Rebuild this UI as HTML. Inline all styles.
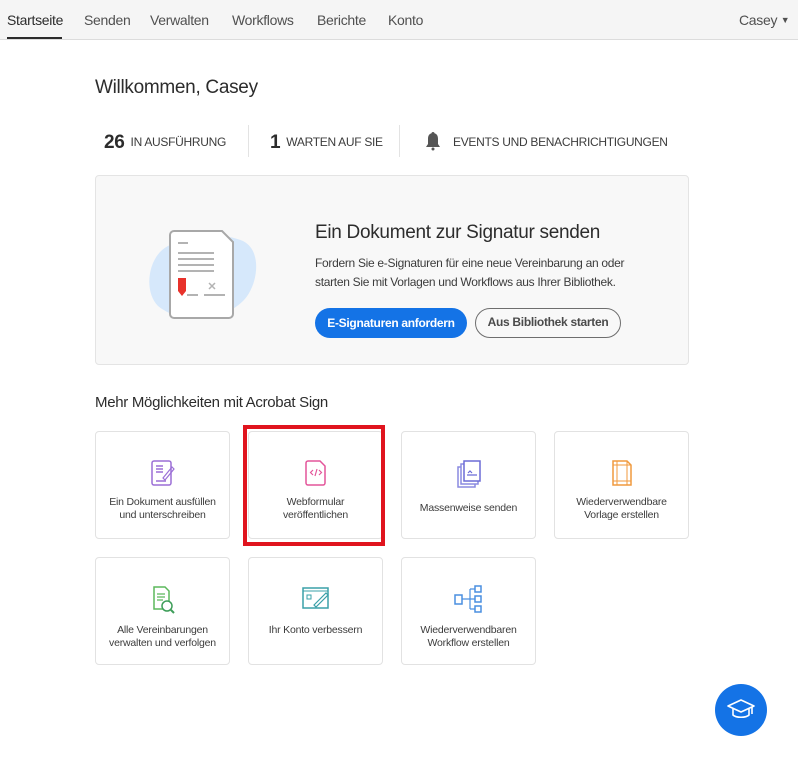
<!DOCTYPE html>
<html><head><meta charset="utf-8"><style>
*{box-sizing:border-box;margin:0;padding:0}
body{width:798px;height:784px;background:#fff;font-family:"Liberation Sans",sans-serif;color:#2c2c2c;position:relative;overflow:hidden}
.nav{position:absolute;left:0;top:0;width:798px;height:40px;background:#f5f5f5;border-bottom:1px solid #dcdcdc}
.nav span{position:absolute;top:12px;font-size:14px;color:#505050;letter-spacing:-0.3px}
.nav .act{color:#2c2c2c}
.ul{position:absolute;left:7px;top:37px;width:55px;height:2px;background:#2c2c2c}
h1{position:absolute;left:95px;top:77px;font-size:19px;font-weight:normal;color:#2c2c2c;letter-spacing:-0.3px}
.st{position:absolute;top:132px;font-size:12px;color:#3c3c3c;letter-spacing:-0.3px}
.st b{font-size:19px;font-weight:bold;color:#2c2c2c;margin-right:6px;vertical-align:-2px}
.sep{position:absolute;top:125px;width:1px;height:32px;background:#e3e3e3}
.hero{position:absolute;left:95px;top:175px;width:594px;height:190px;background:#f8f8f8;border:1px solid #e4e4e4;border-radius:4px}
.hero h2{position:absolute;left:219px;top:46px;font-size:19px;font-weight:normal;letter-spacing:-0.3px}
.hero p{position:absolute;left:219px;top:78px;font-size:12px;line-height:19px;color:#3c3c3c;width:340px;letter-spacing:-0.3px}
.b1{position:absolute;left:219px;top:132px;width:152px;height:30px;border-radius:15px;background:#1473e6;color:#fff;font-size:12px;font-weight:bold;text-align:center;line-height:30px;letter-spacing:-0.3px}
.b2{position:absolute;left:379px;top:132px;width:146px;height:30px;border-radius:15px;border:1.5px solid #6e6e6e;color:#4b4b4b;font-size:12px;font-weight:bold;text-align:center;line-height:27px;letter-spacing:-0.3px}
h3{position:absolute;left:95px;top:394px;font-size:15px;font-weight:normal;letter-spacing:-0.3px}
.c{position:absolute;width:135px;height:108px;border:1px solid #e2e2e2;border-radius:4px;background:#fff}
.c svg{position:absolute;left:50%;top:27px;transform:translateX(-50%)}
.c div{position:absolute;left:0;right:0;top:64px;text-align:center;font-size:10.5px;line-height:12.5px;color:#3c3c3c;letter-spacing:-0.2px}
.red{position:absolute;left:243px;top:425px;width:142px;height:121px;border:4px solid #e0141e}
.fab{position:absolute;left:715px;top:684px;width:52px;height:52px;border-radius:50%;background:#1473e6}
</style></head><body>
<div class="nav">
<span class="act" style="left:7px">Startseite</span>
<span style="left:84px">Senden</span>
<span style="left:150px">Verwalten</span>
<span style="left:232px">Workflows</span>
<span style="left:317px">Berichte</span>
<span style="left:388px">Konto</span>
<span style="left:739px">Casey <small style="font-size:9px;vertical-align:2px">▼</small></span>
<div class="ul"></div>
</div>
<h1>Willkommen, Casey</h1>
<div class="st" style="left:104px"><b>26</b>IN AUSFÜHRUNG</div>
<div class="sep" style="left:248px"></div>
<div class="st" style="left:270px"><b>1</b>WARTEN AUF SIE</div>
<div class="sep" style="left:399px"></div>
<svg style="position:absolute;left:424px;top:131px" width="18" height="20" viewBox="0 0 18 20"><path d="M9 1c-1 0-1.5.7-1.5 1.3C5 3 4 5 4 8v5l-2 3h14l-2-3V8c0-3-1-5-3.5-5.7C10.5 1.7 10 1 9 1z" fill="#555"/><circle cx="9" cy="18" r="1.5" fill="#555"/></svg>
<div class="st" style="left:453px;top:135px">EVENTS UND BENACHRICHTIGUNGEN</div>
<div class="hero">
<svg style="position:absolute;left:52px;top:50px" width="115" height="95" viewBox="0 0 115 95"><path d="M20 20C40 10 70 5 95 15c20 10 15 45 0 60-20 20-60 25-85 5C-5 65 0 30 20 20z" fill="#d6e8fb"/><path d="M26 5h48l11 11v72a4 4 0 0 1-4 4H26a4 4 0 0 1-4-4V9a4 4 0 0 1 4-4z" fill="#fff" stroke="#a8a8a8" stroke-width="2"/><path d="M30 17h10M30 27h36M30 33h36M30 39h36M30 45h36M56 69h21M39 69h11" stroke="#b3b3b3" stroke-width="2"/><path d="M61 57l6 6M67 57l-6 6" stroke="#b3b3b3" stroke-width="1.5"/><path d="M30 52h8v13l-4 5-4-5z" fill="#e8322b"/></svg>
<h2>Ein Dokument zur Signatur senden</h2>
<p>Fordern Sie e-Signaturen für eine neue Vereinbarung an oder starten Sie mit Vorlagen und Workflows aus Ihrer Bibliothek.</p>
<div class="b1">E-Signaturen anfordern</div>
<div class="b2">Aus Bibliothek starten</div>
</div>
<h3>Mehr Möglichkeiten mit Acrobat Sign</h3>
<div class="c" style="left:95px;top:431px"><svg width="26" height="28" viewBox="0 0 26 28"><rect x="2" y="2" width="19" height="24" rx="2" fill="none" stroke="#9b6fd6" stroke-width="1.5"/><path d="M6 7h7M6 10h7M6 13h7M6 22h10" stroke="#9b6fd6" stroke-width="1.5"/><path d="M13 19l9-11 2 2-9 11z" fill="none" stroke="#9b6fd6" stroke-width="1.2"/></svg><div>Ein Dokument ausfüllen<br>und unterschreiben</div></div>
<div class="c" style="left:248px;top:431px"><svg width="22" height="28" viewBox="0 0 22 28"><path d="M3 2h12l5 5v17a2 2 0 0 1-2 2H3a2 2 0 0 1-2-2V4a2 2 0 0 1 2-2z" fill="none" stroke="#e3559a" stroke-width="1.5"/><path d="M8 11l-2.5 2.5L8 16M14 11l2.5 2.5L14 16M12 10l-2 7" stroke="#e3559a" stroke-width="1.2" fill="none"/></svg><div>Webformular<br>veröffentlichen</div></div>
<div class="c" style="left:401px;top:431px"><svg width="26" height="30" viewBox="0 0 26 30"><rect x="2" y="8" width="17" height="20" fill="none" stroke="#8a8ae0" stroke-width="1.5"/><rect x="5" y="5" width="17" height="20" fill="#fff" stroke="#8a8ae0" stroke-width="1.5"/><rect x="8" y="2" width="16" height="20" fill="#fff" stroke="#6b6bd6" stroke-width="1.5"/><path d="M11 16h10M12 14l2-2 2 2" stroke="#6b6bd6" stroke-width="1.2" fill="none"/></svg><div style="top:70px">Massenweise senden</div></div>
<div class="c" style="left:554px;top:431px"><svg width="22" height="28" viewBox="0 0 22 28"><path d="M2 2h14l4 4v20H2z" fill="none" stroke="#f09a3e" stroke-width="1.5"/><path d="M2 6h18M2 22h18M6 2v24M16 2v24" stroke="#f09a3e" stroke-width="1"/></svg><div>Wiederverwendbare<br>Vorlage erstellen</div></div>
<div class="c" style="left:95px;top:557px"><svg width="26" height="30" viewBox="0 0 26 30"><path d="M4 2h11l4 4v18H4z" fill="none" stroke="#5cb85c" stroke-width="1.5"/><path d="M7 9h8M7 12h8M7 15h6" stroke="#5cb85c" stroke-width="1.2"/><circle cx="17" cy="21" r="5" fill="#fff" stroke="#3f9e5a" stroke-width="1.5"/><path d="M21 25l3 3" stroke="#3f9e5a" stroke-width="2"/></svg><div style="top:66px">Alle Vereinbarungen<br>verwalten und verfolgen</div></div>
<div class="c" style="left:248px;top:557px"><svg width="30" height="26" viewBox="0 0 30 26"><rect x="2" y="3" width="25" height="20" fill="none" stroke="#3aa0a8" stroke-width="1.5"/><path d="M2 6h25" stroke="#3aa0a8"/><rect x="6" y="10" width="4" height="4" fill="none" stroke="#3aa0a8"/><path d="M13 20l12-12 2 2-12 12z" fill="none" stroke="#3aa0a8" stroke-width="1.2"/></svg><div style="top:66px">Ihr Konto verbessern</div></div>
<div class="c" style="left:401px;top:557px"><svg width="30" height="30" viewBox="0 0 30 30"><rect x="1" y="10" width="7" height="9" fill="none" stroke="#4a8fe0" stroke-width="1.5"/><rect x="21" y="1" width="6" height="6" fill="none" stroke="#4a8fe0" stroke-width="1.5"/><rect x="21" y="11" width="6" height="6" fill="none" stroke="#4a8fe0" stroke-width="1.5"/><rect x="21" y="21" width="6" height="6" fill="none" stroke="#4a8fe0" stroke-width="1.5"/><path d="M8 14h8M16 4v20M16 4h5M16 14h5M16 24h5" stroke="#4a8fe0" stroke-width="1.2" fill="none"/></svg><div style="top:66px">Wiederverwendbaren<br>Workflow erstellen</div></div>
<div class="red"></div>
<div class="fab"><svg style="position:absolute;left:11px;top:13px" width="30" height="26" viewBox="0 0 30 26"><path d="M15 3L2 9l13 6 13-6z" fill="none" stroke="#fff" stroke-width="1.6" stroke-linejoin="round"/><path d="M7 12v6c3 3 13 3 16 0v-6" fill="none" stroke="#fff" stroke-width="1.6"/><path d="M26 10v7" stroke="#fff" stroke-width="1.6"/></svg></div>
</body></html>
